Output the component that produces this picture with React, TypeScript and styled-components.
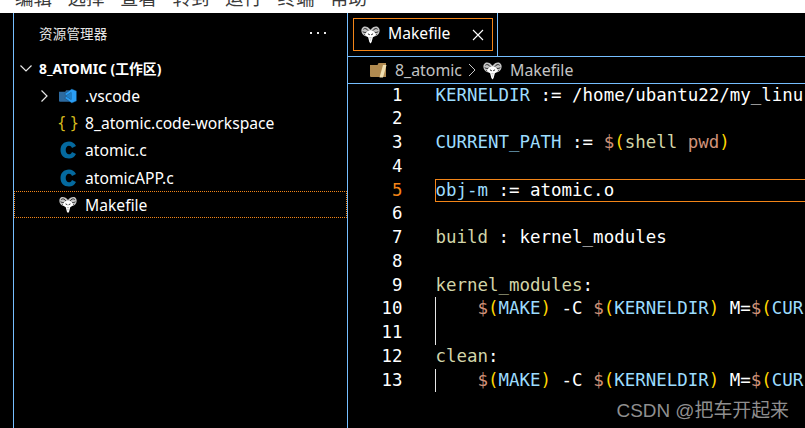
import React from 'react';
import styled, { createGlobalStyle } from 'styled-components';

const UI_FONT = '"Noto Sans", "Noto Sans CJK SC", sans-serif';
const MONO_FONT = '"DejaVu Sans Mono", monospace';

const COLORS = {
    line: '#75beff',
    focus: '#f38518',
    blue: '#9cdcfe',
    text: '#ffffff',
    muted: '#ce9178',
    yellow: '#ffd700',
    green: '#d2d5a8',
};

const GlobalStyle = createGlobalStyle`
    html, body {
        margin: 0;
        padding: 0;
        background: #000000;
        overflow: hidden;
    }
`;

const GnuIcon: React.FC<{ size: number }> = ({ size }) => (
    <svg width={size} height={size} viewBox="0 0 20 20">
        {/* horns, a heart-like silhouette with dark stripes */}
        <path
            d="M10 5C8 2 4.500.8 2.300 2 .2 3.300-.2 6.500 1.200 9c1.200 2 3.300 3 5.300 3h7c2 0 4.100-1 5.300-3 1.400-2.500 1-5.700-1.100-7C15.500.8 12 2 10 5z"
            fill="#c4c4c4"
        />
        <path
            d="M2.500 4.500C4 3 6.500 4 7.500 6M1.800 7c1.500 1 3 1 4.500.5M3.500 10c1 .5 2 .5 3 .2M17.500 4.500C16 3 13.500 4 12.500 6M18.200 7c-1.500 1-3 1-4.500.5M16.500 10c-1 .5-2 .5-3 .2"
            stroke="#1c1c1c"
            strokeWidth="1"
            fill="none"
        />
        {/* head */}
        <path d="M6 7L10 5.500 14 7l2 3.500-3.500 2.500-1.300 5-1.200 1.500L8.800 18l-1.300-5L4 10.500z" fill="#ffffff" />
        <path d="M7.300 9.300l2 1M12.700 9.300l-2 1" stroke="#1c1c1c" strokeWidth="1" />
        <path d="M8.800 13.500h2.400M9.300 15.800h1.400" stroke="#9a9a9a" strokeWidth=".8" />
    </svg>
);

const VscodeFolderIcon = () => (
    <svg width="19" height="18" viewBox="0 0 19 18">
        <path d="M0 4.500h6.500l1-1.500h6v12H1a1 1 0 0 1-1-1z" fill="#2d6a9f" />
        <path d="M13.500 1.500L18.500 3.800v10.400L13.500 16.500 6 11.200l1.800-1.700 5 3.200V5.300l-5 3.200L6 6.800z" fill="#2a9df4" stroke="#0b3a5e" strokeWidth=".4" />
        <path d="M7.500 9l5.500-3.700v7.400z" fill="#1f7fc8" />
    </svg>
);

const BracesIcon = () => <Braces>{'{ }'}</Braces>;

const CIcon = () => (
    <svg width="17" height="18" viewBox="0 0 17 18">
        <path
            d="M16 5C14.600 2 12 .5 9 .5 3.800.5.500 4 .500 9s3.300 8.500 8.500 8.500c3 0 5.600-1.500 7-4.500l-4-2c-.6 1.500-1.600 2.300-3 2.300-2 0-3.300-1.700-3.300-4.300S7 4.700 9 4.700c1.400 0 2.400.8 3 2.300z"
            fill="#04699e"
        />
    </svg>
);

const BreadcrumbFolderIcon = () => (
    <svg width="17" height="16" viewBox="0 0 17 16">
        <path d="M0 3h7.500l1-2H16v14H1a1 1 0 0 1-1-1z" fill="#b08a50" />
        <path d="M13 3h3.500L13 15.500H9.500z" fill="#f0dfb0" />
    </svg>
);

const Chevron: React.FC<{ open?: boolean }> = ({ open }) => (
    <svg width="14" height="14" viewBox="0 0 14 14">
        <path
            d={open ? 'M1.500 4.500L7 10l5.500-5.500' : 'M4.500 1.500L10 7l-5.500 5.500'}
            stroke="#e8e8e8"
            strokeWidth="1.200"
            fill="none"
        />
    </svg>
);

const menuItems = ['编辑', '选择', '查看', '转到', '运行', '终端', '帮助'];

const files = [
    { name: '.vscode', icon: <VscodeFolderIcon />, folder: true },
    { name: '8_atomic.code-workspace', icon: <BracesIcon /> },
    { name: 'atomic.c', icon: <CIcon /> },
    { name: 'atomicAPP.c', icon: <CIcon /> },
    { name: 'Makefile', icon: <GnuIcon size={19} />, selected: true },
];

type Token = { t: string; c?: keyof typeof COLORS };
type CodeLine = { tokens: Token[]; guide?: boolean; current?: boolean };

const D: Token = { t: '$', c: 'muted' };
const variable = (name: string): Token[] => [D, { t: '(', c: 'yellow' }, { t: name, c: 'blue' }, { t: ')', c: 'yellow' }];
const makeCall: Token[] = [
    { t: '    ' },
    ...variable('MAKE'),
    { t: ' -C ' },
    ...variable('KERNELDIR'),
    { t: ' M=' },
    D,
    { t: '(', c: 'yellow' },
    { t: 'CUR', c: 'blue' },
];

const code: CodeLine[] = [
    { tokens: [{ t: 'KERNELDIR', c: 'blue' }, { t: ' := /home/ubantu22/my_linu' }] },
    { tokens: [] },
    {
        tokens: [
            { t: 'CURRENT_PATH', c: 'blue' },
            { t: ' := ' },
            D,
            { t: '(', c: 'yellow' },
            { t: 'shell', c: 'green' },
            { t: ' ' },
            { t: 'pwd', c: 'muted' },
            { t: ')', c: 'yellow' },
        ],
    },
    { tokens: [] },
    { tokens: [{ t: 'obj-m', c: 'blue' }, { t: ' := atomic.o' }], current: true },
    { tokens: [] },
    { tokens: [{ t: 'build', c: 'green' }, { t: ' : kernel_modules' }] },
    { tokens: [] },
    { tokens: [{ t: 'kernel_modules', c: 'green' }, { t: ':' }] },
    { tokens: makeCall, guide: true },
    { tokens: [], guide: true },
    { tokens: [{ t: 'clean', c: 'green' }, { t: ':' }] },
    { tokens: makeCall, guide: true },
];

const App: React.FC = () => (
    <Page>
        <GlobalStyle />
        <MenuBar>
            {menuItems.map((item) => (
                <MenuItem key={item}>{item}</MenuItem>
            ))}
        </MenuBar>
        <Workbench>
            <ActivityBar />
            <Sidebar>
                <SidebarHeader>
                    <SidebarTitle>资源管理器</SidebarTitle>
                    <MoreDots>
                        <i />
                        <i />
                        <i />
                    </MoreDots>
                </SidebarHeader>
                <WorkspaceRow>
                    <ChevronSlot>
                        <Chevron open />
                    </ChevronSlot>
                    <WorkspaceName>8_ATOMIC (工作区)</WorkspaceName>
                </WorkspaceRow>
                {files.map((file) => (
                    <FileRow key={file.name} selected={file.selected}>
                        <FileChevron>{file.folder && <Chevron />}</FileChevron>
                        <FileIcon>{file.icon}</FileIcon>
                        <FileName>{file.name}</FileName>
                    </FileRow>
                ))}
            </Sidebar>
            <Editor>
                <TabBar>
                    <TabCell>
                        <Tab>
                            <GnuIcon size={19} />
                            <TabLabel>Makefile</TabLabel>
                            <CloseIcon viewBox="0 0 12 12">
                                <path d="M1 1l10 10M11 1L1 11" stroke="#ffffff" strokeWidth="1.100" />
                            </CloseIcon>
                        </Tab>
                    </TabCell>
                </TabBar>
                <Breadcrumbs>
                    <BreadcrumbFolderIcon />
                    <Crumb>8_atomic</Crumb>
                    <CrumbSeparator viewBox="0 0 8 14">
                        <path d="M1 1l6 6-6 6" stroke="#c8c8c8" strokeWidth="1" fill="none" />
                    </CrumbSeparator>
                    <GnuIcon size={19} />
                    <Crumb>Makefile</Crumb>
                </Breadcrumbs>
                <CodeArea>
                    {code.map((line, index) => (
                        <CodeRow key={index}>
                            <LineNumber current={line.current}>{index + 1}</LineNumber>
                            <LineContent current={line.current} guide={line.guide}>
                                {line.tokens.map((token, i) => (
                                    <Span key={i} tone={token.c}>
                                        {token.t}
                                    </Span>
                                ))}
                            </LineContent>
                        </CodeRow>
                    ))}
                    <Watermark>CSDN @把车开起来</Watermark>
                </CodeArea>
            </Editor>
        </Workbench>
    </Page>
);

const Page = styled.div`
    width: 805px;
    height: 428px;
    overflow: hidden;
    background: #000000;
    display: flex;
    flex-direction: column;
`;

const MenuBar = styled.div`
    height: 13px;
    flex: none;
    background: #ffffff;
    overflow: hidden;
    display: flex;
    gap: 15.500px;
    padding-left: 15px;
`;

const MenuItem = styled.span`
    font-family: ${UI_FONT};
    font-size: 18.500px;
    line-height: 19px;
    margin-top: -12px;
    color: #3a3a3a;
`;

const Workbench = styled.div`
    flex: 1;
    display: flex;
    min-height: 0;
`;

const ActivityBar = styled.div`
    width: 13px;
    flex: none;
    border-right: 1px solid ${COLORS.line};
`;

const Sidebar = styled.div`
    width: 333px;
    flex: none;
    border-right: 1px solid ${COLORS.line};
    display: flex;
    flex-direction: column;
`;

const SidebarHeader = styled.div`
    height: 41px;
    padding-bottom: 1px;
    box-sizing: border-box;
    display: flex;
    align-items: center;
    justify-content: space-between;
    padding-left: 25px;
    padding-right: 21px;
`;

const SidebarTitle = styled.span`
    font-family: ${UI_FONT};
    font-size: 13.500px;
    color: #e6e6e6;
    letter-spacing: 0.2px;
`;

const MoreDots = styled.div`
    display: flex;
    gap: 4.500px;

    i {
        width: 2.500px;
        height: 2.500px;
        background: #e8e8e8;
    }
`;

const WorkspaceRow = styled.div`
    height: 28px;
    display: flex;
    align-items: center;
    padding-left: 5px;
`;

const ChevronSlot = styled.span`
    width: 20px;
    display: flex;
    align-items: center;
`;

const WorkspaceName = styled.span`
    font-family: ${UI_FONT};
    font-size: 13.800px;
    font-weight: 700;
    color: #ffffff;
`;

const FileRow = styled.div<{ selected?: boolean }>`
    height: 27.300px;
    box-sizing: border-box;
    display: flex;
    align-items: center;
    padding-left: 23px;
    outline: ${(props) => (props.selected ? `1px dotted ${COLORS.focus}` : 'none')};
    outline-offset: -1px;
`;

const FileChevron = styled.span`
    width: 22px;
    display: flex;
    align-items: center;
`;

const FileIcon = styled.span`
    width: 18px;
    margin-right: 8px;
    display: flex;
    align-items: center;
    justify-content: center;
`;

const Braces = styled.span`
    font-family: "DejaVu Sans", sans-serif;
    font-size: 15px;
    line-height: 18px;
    white-space: nowrap;
    color: #d9bc1e;
    word-spacing: -2px;
`;

const FileName = styled.span`
    font-family: ${UI_FONT};
    font-size: 15.650px;
    color: #ffffff;
`;

const Editor = styled.div`
    flex: 1;
    min-width: 0;
    display: flex;
    flex-direction: column;
`;

const TabBar = styled.div`
    height: 44px;
    flex: none;
    box-sizing: border-box;
    border-bottom: 1px solid ${COLORS.line};
    display: flex;
`;

const TabCell = styled.div`
    width: 150px;
    box-sizing: border-box;
    border-right: 1px solid ${COLORS.line};
    padding: 5px 4px 5px 5px;
`;

const Tab = styled.div`
    height: 100%;
    width: 140px;
    box-sizing: border-box;
    border: 1px solid ${COLORS.focus};
    display: flex;
    align-items: center;
    padding-left: 7px;
`;

const TabLabel = styled.span`
    font-family: ${UI_FONT};
    font-size: 15.650px;
    line-height: 20px;
    margin-bottom: 3px;
    color: #ffffff;
    margin-left: 8px;
    flex: 1;
`;

const CloseIcon = styled.svg`
    width: 12px;
    height: 12px;
    margin-right: 8px;
`;

const Breadcrumbs = styled.div`
    height: 27px;
    flex: none;
    box-sizing: border-box;
    border-bottom: 1px solid ${COLORS.line};
    display: flex;
    align-items: center;
    padding-left: 22px;
`;

const Crumb = styled.span`
    font-family: ${UI_FONT};
    font-size: 15.900px;
    color: #c4c4c4;
    margin-left: 8px;
`;

const CrumbSeparator = styled.svg`
    width: 8px;
    height: 14px;
    margin: 0 7px 0 6px;
`;

const CodeArea = styled.div`
    position: relative;
    flex: 1;
    margin-top: -0.500px;
`;

const CodeRow = styled.div`
    height: 23.750px;
    display: flex;
    align-items: stretch;
`;

const LineNumber = styled.div<{ current?: boolean }>`
    width: 54.500px;
    flex: none;
    text-align: right;
    font-family: ${MONO_FONT};
    font-size: 17.400px;
    line-height: 23.750px;
    color: ${(props) => (props.current ? COLORS.focus : '#ffffff')};
`;

const LineContent = styled.div<{ current?: boolean; guide?: boolean }>`
    flex: 1;
    min-width: 0;
    margin-left: 32px;
    box-sizing: border-box;
    white-space: pre;
    overflow: hidden;
    font-family: ${MONO_FONT};
    font-size: 17.470px;
    color: #ffffff;
    border-left: 1px solid ${(props) => (props.current ? COLORS.focus : props.guide ? '#e6e6e6' : 'transparent')};
    border-top: ${(props) => (props.current ? `1px solid ${COLORS.focus}` : 'none')};
    border-bottom: ${(props) => (props.current ? `1px solid ${COLORS.focus}` : 'none')};
    line-height: ${(props) => (props.current ? '21.750px' : '23.750px')};
`;

const Span = styled.span<{ tone?: keyof typeof COLORS }>`
    color: ${(props) => (props.tone ? COLORS[props.tone] : 'inherit')};
`;

const Watermark = styled.div`
    position: absolute;
    right: 16px;
    bottom: 6px;
    font-family: "Liberation Sans", "Noto Sans CJK SC", sans-serif;
    font-size: 18.900px;
    color: #8f8f8f;
`;

export default App;
